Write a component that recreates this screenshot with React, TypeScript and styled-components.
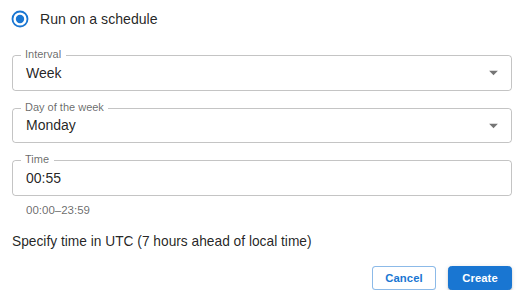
import React from "react";
import styled, { createGlobalStyle } from "styled-components";

const GlobalStyle = createGlobalStyle`
  html, body {
    margin: 0;
    padding: 0;
    background: #ffffff;
  }
  body {
    font-family: "Liberation Sans", Arial, sans-serif;
    color: rgba(0, 0, 0, 0.87);
    -webkit-font-smoothing: antialiased;
  }
`;

const Page = styled.div`
  width: 500px;
  padding: 0 13px 0 12px;
  display: flex;
  flex-direction: column;
`;

const RadioRow = styled.label`
  display: flex;
  align-items: center;
  height: 38px;
  margin-left: -2px;
  gap: 10px;
  font-size: 14.1px;
  line-height: 20px;
  color: rgba(0, 0, 0, 0.87);
`;

const RadioIcon = styled.svg`
  width: 20px;
  height: 20px;
  flex: none;
`;

const Fields = styled.div`
  display: flex;
  flex-direction: column;
  gap: 17px;
  margin-top: 17px;
`;

const FieldBox = styled.div`
  position: relative;
  box-sizing: border-box;
  height: 35.5px;
  border: 1px solid rgba(0, 0, 0, 0.23);
  border-radius: 3.5px;
  display: flex;
  align-items: center;
  padding: 0 13px;
`;

const FieldLabel = styled.span`
  position: absolute;
  left: 7.5px;
  top: -8px;
  padding: 0 4.5px;
  background: #ffffff;
  font-size: 11px;
  line-height: 12px;
  color: rgba(0, 0, 0, 0.6);
`;

const FieldValue = styled.span`
  flex: 1;
  font-size: 14px;
  line-height: 20px;
  color: rgba(0, 0, 0, 0.87);
`;

const Arrow = styled.svg`
  position: absolute;
  right: 7px;
  top: 50%;
  width: 21px;
  height: 21px;
  margin-top: -10.5px;
  fill: rgba(0, 0, 0, 0.54);
`;

const Helper = styled.div`
  margin-top: 8px;
  padding-left: 14px;
  font-size: 11.5px;
  line-height: 12px;
  color: rgba(0, 0, 0, 0.6);
`;

const Note = styled.div`
  margin-top: 16px;
  font-size: 13.75px;
  line-height: 20px;
  color: rgba(0, 0, 0, 0.87);
`;

const Actions = styled.div`
  margin-top: 14px;
  display: flex;
  justify-content: flex-end;
  gap: 12px;
`;

const Button = styled.button<{ $primary?: boolean }>`
  box-sizing: border-box;
  width: 64px;
  height: 24.5px;
  border-radius: 3.5px;
  font-family: "Liberation Sans", Arial, sans-serif;
  font-size: 11.25px;
  font-weight: 700;
  letter-spacing: 0.1px;
  cursor: pointer;
  padding: 0;
  border: 1px solid ${(p) => (p.$primary ? "#1976d2" : "rgba(25, 118, 210, 0.5)")};
  background: ${(p) => (p.$primary ? "#1976d2" : "#ffffff")};
  color: ${(p) => (p.$primary ? "#ffffff" : "#1976d2")};
  box-shadow: ${(p) =>
    p.$primary
      ? "0px 3px 1px -2px rgba(0,0,0,0.2), 0px 2px 2px 0px rgba(0,0,0,0.14), 0px 1px 5px 0px rgba(0,0,0,0.12)"
      : "none"};
`;

type FieldProps = { label: string; value: string; select?: boolean };

const Field = ({ label, value, select }: FieldProps) => (
  <FieldBox>
    <FieldLabel>{label}</FieldLabel>
    <FieldValue>{value}</FieldValue>
    {select && (
      <Arrow viewBox="0 0 24 24">
        <path d="M7 10l5 5 5-5z" />
      </Arrow>
    )}
  </FieldBox>
);

export default function App() {
  return (
    <>
      <GlobalStyle />
      <Page>
        <RadioRow>
          <RadioIcon viewBox="0 0 24 24">
            <circle cx="12" cy="12" r="9" fill="none" stroke="#1976d2" strokeWidth="2.2" />
            <circle cx="12" cy="12" r="5" fill="#1976d2" />
          </RadioIcon>
          Run on a schedule
        </RadioRow>
        <Fields>
          <Field label="Interval" value="Week" select />
          <Field label="Day of the week" value="Monday" select />
          <div>
            <Field label="Time" value="00:55" />
            <Helper>00:00–23:59</Helper>
          </div>
        </Fields>
        <Note>Specify time in UTC (7 hours ahead of local time)</Note>
        <Actions>
          <Button>Cancel</Button>
          <Button $primary>Create</Button>
        </Actions>
      </Page>
    </>
  );
}
